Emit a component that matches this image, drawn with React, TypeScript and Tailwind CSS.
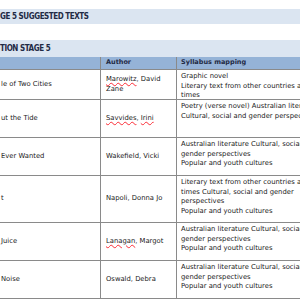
import React from "react";

type Row = {
  title: string;
  author: React.ReactNode;
  mapping: string[];
  h: string;
};

const Typo = ({ children }: { children: React.ReactNode }) => (
  <span className="underline decoration-wavy decoration-red-500 decoration-[0.5px] underline-offset-1">
    {children}
  </span>
);

const rows: Row[] = [
  {
    title: "le of Two Cities",
    author: (
      <>
        <Typo>Marowitz</Typo>, David
        <br />
        Zane
      </>
    ),
    mapping: ["Graphic novel", "Literary text from other countries and", "times"],
    h: "h-[30px]",
  },
  {
    title: "ut the Tide",
    author: (
      <>
        <Typo>Savvides</Typo>, <Typo>Irini</Typo>
      </>
    ),
    mapping: ["Poetry (verse novel) Australian literature", "Cultural, social and gender perspectives"],
    h: "h-[38px]",
  },
  {
    title: "Ever Wanted",
    author: "Wakefield, Vicki",
    mapping: ["Australian literature Cultural, social and", "gender perspectives", "Popular and youth cultures"],
    h: "h-[38px]",
  },
  {
    title: "t",
    author: "Napoli, Donna Jo",
    mapping: [
      "Literary text from other countries and",
      "times Cultural, social and gender",
      "perspectives",
      "Popular and youth cultures",
    ],
    h: "h-[47px]",
  },
  {
    title: "Juice",
    author: (
      <>
        <Typo>Lanagan</Typo>, Margot
      </>
    ),
    mapping: ["Australian literature Cultural, social and", "gender perspectives", "Popular and youth cultures"],
    h: "h-[38px]",
  },
  {
    title: "Noise",
    author: "Oswald, Debra",
    mapping: ["Australian literature Cultural, social and", "gender perspectives", "Popular and youth cultures"],
    h: "h-[38px]",
  },
];

export default function App() {
  return (
    <div className="w-[300px] h-[300px] overflow-hidden bg-white text-[#222] font-['DejaVu_Sans',sans-serif]">
      <div className="h-[9px]" />
      <div className="h-[15px] bg-[#dbe5f1] flex items-center text-[8px] font-bold text-[#1f2a44] whitespace-nowrap font-['DejaVu_Sans_Condensed','Liberation_Sans',sans-serif] tracking-[-0.45px]">
        GE 5 SUGGESTED TEXTS
      </div>
      <div className="h-[16px]" />
      <div className="h-[17px] bg-[#dbe5f1] flex items-center text-[8px] font-bold text-[#1f2a44] whitespace-nowrap font-['DejaVu_Sans_Condensed','Liberation_Sans',sans-serif] tracking-[-0.45px]">
        TION STAGE 5
      </div>

      <div className="grid grid-cols-[101px_76px_1fr] h-[13px] bg-[#95b3d7] text-[6.5px] font-bold text-[#1f2a44] border-b border-[#8a8a8a]">
        <div className="border-r border-[#8a8a8a]" />
        <div className="border-r border-[#8a8a8a] pl-[5px] flex items-center">Author</div>
        <div className="pl-[4px] flex items-center whitespace-nowrap">Syllabus mapping</div>
      </div>

      {rows.map((r, i) => (
        <div
          key={i}
          className={`grid grid-cols-[101px_76px_1fr] ${r.h} border-b border-[#8a8a8a] text-[6.8px] leading-[9.5px]`}
        >
          <div className="border-r border-[#8a8a8a] pl-[1px] flex items-center whitespace-nowrap">{r.title}</div>
          <div className="border-r border-[#8a8a8a] pl-[5px] flex items-center whitespace-nowrap overflow-hidden">
            <div>{r.author}</div>
          </div>
          <div className="pl-[4px] pt-[2px] whitespace-nowrap overflow-hidden">
            {r.mapping.map((m, j) => (
              <div key={j}>{m}</div>
            ))}
          </div>
        </div>
      ))}
    </div>
  );
}
